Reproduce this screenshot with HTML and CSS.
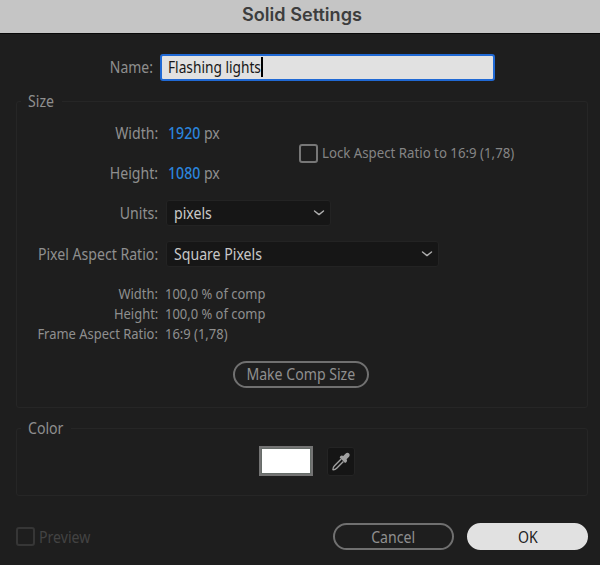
FILE: index.html
```html
<!DOCTYPE html>
<html lang="en">
<head>
<meta charset="utf-8">
<title>Solid Settings</title>
<link rel="stylesheet" href="styles.css">
</head>
<body>
<main class="dialog">
  <header class="titlebar"><h1>Solid Settings</h1></header>

  <div class="name-row">
    <span class="label"><span class="t r">Name:</span></span>
    <div class="name-input"><span class="t l">Flashing lights</span><i class="caret"></i></div>
  </div>

  <fieldset class="group size">
    <legend><span class="t l">Size</span></legend>
    <div class="dimensions">
      <div class="fields">
        <div class="row"><span class="label"><span class="t r">Width:</span></span><span class="value"><span class="t l"><b>1920</b> px</span></span></div>
        <div class="row"><span class="label"><span class="t r">Height:</span></span><span class="value"><span class="t l"><b>1080</b> px</span></span></div>
      </div>
      <div class="lock"><i class="box"></i><span class="t l small">Lock Aspect Ratio to 16:9 (1,78)</span></div>
    </div>
    <div class="row"><span class="label"><span class="t r">Units:</span></span>
      <div class="select units"><span class="t l">pixels</span><svg class="chevron" viewBox="0 0 12 8"><path d="M1.5 2 6 5.6 10.5 2"/></svg></div></div>
    <div class="row"><span class="label"><span class="t r">Pixel Aspect Ratio:</span></span>
      <div class="select ratio"><span class="t l">Square Pixels</span><svg class="chevron" viewBox="0 0 12 8"><path d="M1.5 2 6 5.6 10.5 2"/></svg></div></div>
    <div class="info">
      <div class="info-row"><span class="label"><span class="t r small">Width:</span></span><span class="t l small">100,0 % of comp</span></div>
      <div class="info-row"><span class="label"><span class="t r small">Height:</span></span><span class="t l small">100,0 % of comp</span></div>
      <div class="info-row"><span class="label"><span class="t r small">Frame Aspect Ratio:</span></span><span class="t l small">16:9 (1,78)</span></div>
    </div>
    <div class="button comp"><span class="t">Make Comp Size</span></div>
  </fieldset>

  <fieldset class="group color">
    <legend><span class="t l">Color</span></legend>
    <div class="color-row">
      <div class="swatch"></div>
      <div class="picker">
        <svg viewBox="0 0 28 28"><path class="tube" d="M14.2 11.4 7 18.6C5.6 20 5.2 21.5 5.3 22.8 6.600 23 8 22.500 9.300 21.200L16.600 13.900"/><path class="bulb" d="M13.200 8.300C14.200 7.200 15.500 7.300 16.400 8L18.800 5.600C20 4.500 21.600 4.300 22.700 5.300 23.700 6.300 23.500 8 22.400 9.200L20 11.600C20.700 12.600 20.700 13.800 19.700 14.800L18.400 15.600 12.600 9.800Z"/></svg>
      </div>
    </div>
  </fieldset>

  <footer class="footer">
    <div class="preview"><i class="box"></i><span class="t l">Preview</span></div>
    <div class="button cancel"><span class="t">Cancel</span></div>
    <div class="button ok"><span class="t">OK</span></div>
  </footer>
</main>
</body>
</html>
```
FILE: styles.css
```css
* { box-sizing: border-box; }
body { margin: 0; background: #1e1e1e; }
.dialog {
  width: 600px; height: 565px; overflow: hidden;
  display: flex; flex-direction: column;
  background: #1e1e1e; color: #8f8f8f;
  font: 15.5px/20px "Noto Sans", sans-serif;
}
.titlebar {
  flex: none; height: 34px;
  background: #c5c5c5; border-bottom: 1px solid #080808;
  display: flex; justify-content: center;
}
.titlebar h1 {
  margin: 0 0 0 4px; font: 600 18.1px/28px Inter, sans-serif; color: #3d3d3d;
}
.t { display: inline-block; white-space: nowrap; transform: translateY(-.4px) scaleX(.91); }
.l { transform-origin: left; }
.r { transform-origin: right; }
.small { font-size: 14.4px; transform: scaleX(.91); }
.label { display: flex; justify-content: flex-end; }
.name-row { display: grid; grid-template-columns: 153px 335px; column-gap: 7px; align-items: center; margin-top: 20px; height: 27px; }
.name-input {
  position: relative; height: 27px; padding: 2px 6px;
  background: #e1e1e1; border: 2px solid #2069d4; border-radius: 3px; color: #171717;
  line-height: 20px;
}
.name-input .t { transform: translateY(-1px) scaleX(.885); }
.caret { position: absolute; left: 99px; top: 1px; width: 2px; height: 20px; background: #000; }
.name-row .label .t { transform: translateY(-1px) scaleX(.9); }
.group { margin: 0 12px 0 16px; padding: 0; border: 1px solid #262626; border-radius: 3px; min-width: 0; }
.group legend { margin-left: 4px; padding: 0 0 0 7px; height: 20px; }
.size { height: 317px; margin-top: 10px; flex: none; }
.size legend { width: 41px; }
.dimensions { display: flex; margin-top: 2px; }
.fields { width: 282px; }
.row { display: grid; grid-template-columns: 141px 1fr; column-gap: 8px; align-items: center; height: 40.2px; }
.value { padding-left: 2px; }
.value b { font-weight: 500; color: #2b84dc; }
.lock { display: flex; align-items: center; gap: 4px; height: 80px; color: #858585; }
.lock .t { transform: scaleX(.92); }
.box { flex: none; width: 19px; height: 19px; border: 2px solid #777; border-radius: 3px; }
.select {
  display: flex; align-items: center; justify-content: space-between; height: 26px;
  padding: 0 5px 0 7px; background: #161616; border: 1px solid #232323; border-radius: 3px; color: #c8c8c8;
}
.units { width: 165px; }
.ratio { width: 273px; }
.chevron { width: 12px; height: 8px; fill: none; stroke: #b0b0b0; stroke-width: 1.4; stroke-linecap: round; stroke-linejoin: round; }
.info { margin-top: 10px; }
.info-row { display: grid; grid-template-columns: 141px 1fr; column-gap: 7px; height: 20.3px; }
.info-row .t { transform: scaleX(.9); }
.button { display: flex; align-items: center; justify-content: center; height: 27px; border: 2px solid #707070; border-radius: 14px; flex: none; }
.comp { width: 136px; margin: 16px 0 0 216px; }
.color { height: 78px; margin-top: 10px; flex: none; }
.color legend { width: 50px; }
.color-row { display: flex; align-items: center; gap: 14px; margin: 8px 0 0 242px; }
.swatch { width: 54px; height: 30px; background: #fff; border: 2px solid #747474; box-shadow: inset 0 0 0 1px #666d69; }
.picker { width: 28px; height: 29px; background: #151515; border: 1px solid #242424; border-radius: 3px; }
.picker svg { display: block; width: 26px; height: 27px; }
.tube { fill: none; stroke: #a0a0a0; stroke-width: 1.5; stroke-linejoin: round; }
.bulb { fill: #a0a0a0; }
.footer { display: flex; align-items: center; margin: 27px 12px 0 16px; height: 27px; flex: none; }
.preview { display: flex; align-items: center; gap: 4px; width: 317px; color: #434343; }
.preview .box { border-color: #363636; }
.cancel { width: 121px; }
.ok { width: 121px; margin-left: 13px; background: #e1e1e1; border-color: #e1e1e1; color: #222; }
```
